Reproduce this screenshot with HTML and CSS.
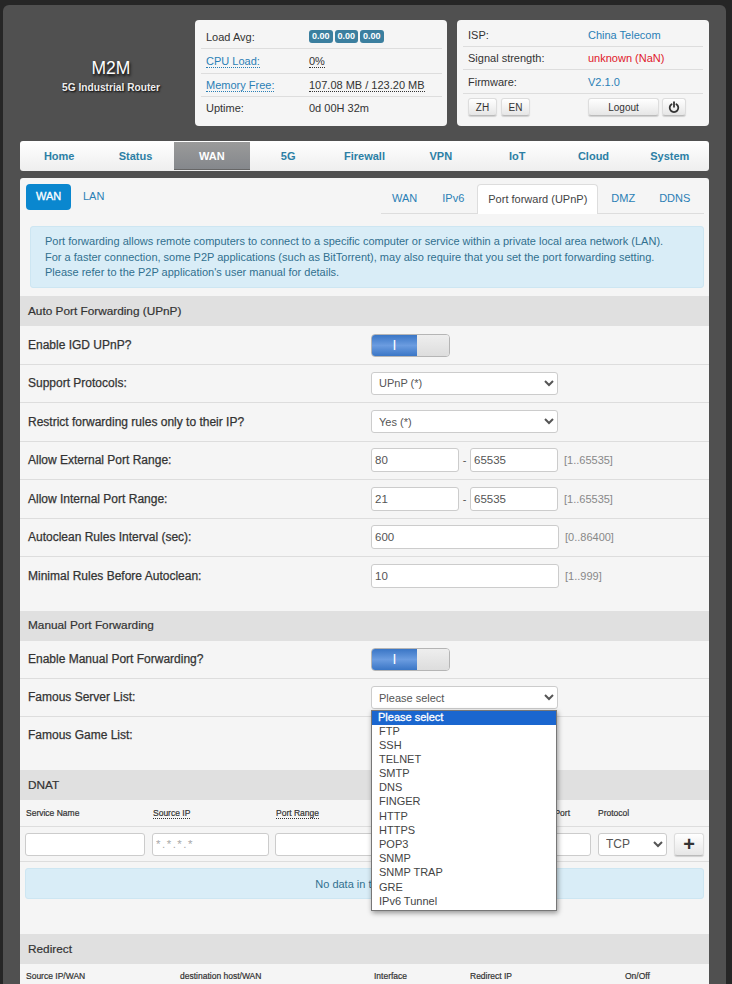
FILE: index.html
```html
<!DOCTYPE html>
<html lang="en">
<head>
<meta charset="utf-8">
<title>M2M</title>
<link rel="stylesheet" href="styles.css">
</head>
<body>
<div class="wrap">
  <header class="top">
    <div class="brand"><div class="brand-name">M2M</div><div class="brand-sub">5G Industrial Router</div></div>
    <div class="panel panel-load">
      <div class="stat"><span class="stat-k">Load Avg:</span><span class="stat-v"><b class="badge">0.00</b><b class="badge">0.00</b><b class="badge">0.00</b></span></div>
      <div class="stat"><span class="stat-k"><a class="hint link">CPU Load:</a></span><span class="stat-v"><span class="hint">0%</span></span></div>
      <div class="stat"><span class="stat-k"><a class="hint link">Memory Free:</a></span><span class="stat-v"><span class="hint">107.08 MB / 123.20 MB</span></span></div>
      <div class="stat"><span class="stat-k">Uptime:</span><span class="stat-v">0d 00H 32m</span></div>
    </div>
    <div class="panel panel-isp">
      <div class="stat"><span class="stat-k isp-k">ISP:</span><span class="stat-v link">China Telecom</span></div>
      <div class="stat"><span class="stat-k isp-k">Signal strength:</span><span class="stat-v red">unknown (NaN)</span></div>
      <div class="stat"><span class="stat-k isp-k">Firmware:</span><span class="stat-v link">V2.1.0</span></div>
      <div class="stat stat-btns">
        <div class="btns-l"><button class="btn btn-lang">ZH</button><button class="btn btn-lang">EN</button></div>
        <div class="btns-r"><button class="btn btn-logout">Logout</button><button class="btn btn-power"><svg width="12" height="13" viewBox="0 0 12 13"><path d="M3.6 3.2a4.3 4.3 0 1 0 4.8 0" fill="none" stroke="#333" stroke-width="1.8" stroke-linecap="round"/><path d="M6 1.2v4.6" stroke="#333" stroke-width="1.8" stroke-linecap="round"/></svg></button></div>
      </div>
    </div>
  </header>

  <nav class="nav">
    <a>Home</a><a>Status</a><a class="active">WAN</a><a>5G</a><a>Firewall</a><a>VPN</a><a>IoT</a><a>Cloud</a><a>System</a>
  </nav>

  <main class="content">
    <div class="tabbar">
      <div class="pills"><a class="pill on">WAN</a><a class="pill">LAN</a></div>
      <div class="tabs"><a class="tab">WAN</a><a class="tab">IPv6</a><a class="tab on">Port forward (UPnP)</a><a class="tab">DMZ</a><a class="tab">DDNS</a></div>
    </div>
    <div class="note">Port forwarding allows remote computers to connect to a specific computer or service within a private local area network (LAN).<br>For a faster connection, some P2P applications (such as BitTorrent), may also require that you set the port forwarding setting.<br>Please refer to the P2P application's user manual for details.</div>

    <h2 class="sec">Auto Port Forwarding (UPnP)</h2>
    <div class="row"><label>Enable IGD UPnP?</label><div class="toggle"><span class="t-on">I</span><span class="t-off"></span></div></div>
    <div class="row"><label>Support Protocols:</label><select class="sel"><option>UPnP (*)</option></select></div>
    <div class="row"><label>Restrict forwarding rules only to their IP?</label><select class="sel"><option>Yes (*)</option></select></div>
    <div class="row"><label>Allow External Port Range:</label><input class="inp short" value="80"><span class="dash">-</span><input class="inp short" value="65535"><span class="range">[1..65535]</span></div>
    <div class="row"><label>Allow Internal Port Range:</label><input class="inp short" value="21"><span class="dash">-</span><input class="inp short" value="65535"><span class="range">[1..65535]</span></div>
    <div class="row"><label>Autoclean Rules Interval (sec):</label><input class="inp wide" value="600"><span class="range">[0..86400]</span></div>
    <div class="row row-last"><label>Minimal Rules Before Autoclean:</label><input class="inp wide" value="10"><span class="range">[1..999]</span></div>

    <h2 class="sec sec-manual">Manual Port Forwarding</h2>
    <div class="row row-m1"><label>Enable Manual Port Forwarding?</label><div class="toggle"><span class="t-on">I</span><span class="t-off"></span></div></div>
    <div class="row row-m2"><label>Famous Server List:</label><select class="sel sel-low"><option>Please select</option></select>
      <ul class="menu">
        <li class="cur">Please select</li><li>FTP</li><li>SSH</li><li>TELNET</li><li>SMTP</li><li>DNS</li><li>FINGER</li><li>HTTP</li><li>HTTPS</li><li>POP3</li><li>SNMP</li><li>SNMP TRAP</li><li>GRE</li><li>IPv6 Tunnel</li>
      </ul>
    </div>
    <div class="row row-game"><label>Famous Game List:</label></div>

    <h2 class="sec sec-dnat">DNAT</h2>
    <div class="dnat-head">
      <span class="c1">Service Name</span><span class="c2"><span class="hint">Source IP</span></span><span class="c3"><span class="hint">Port Range</span></span><span class="c4"></span><span class="c5">Port</span><span class="c6">Protocol</span>
    </div>
    <div class="dnat-row">
      <input class="inp c1"><input class="inp c2" placeholder="*.*.*.*"><input class="inp c3"><input class="inp c4"><input class="inp c5">
      <select class="sel c6"><option>TCP</option></select>
      <button class="btn btn-add">+</button>
    </div>
    <div class="empty">No data in the table.</div>

    <h2 class="sec sec-redirect">Redirect</h2>
    <div class="redir-head"><span class="r1">Source IP/WAN</span><span class="r2">destination host/WAN</span><span class="r3">Interface</span><span class="r4">Redirect IP</span><span class="r5">On/Off</span></div>
  </main>
</div>
</body>
</html>
```
FILE: styles.css
```css
* { box-sizing: border-box; }
html, body { margin: 0; height: 984px; overflow: hidden; }
body {
  background: #262626;
  font-family: "Liberation Sans", Arial, sans-serif;
  font-size: 11px;
  color: #333;
}
a { color: #2a7fb5; text-decoration: none; }
.wrap {
  margin: 5px 6px 0 3px;
  padding: 15px 17px 0 17px;
  background: #505050;
  border-radius: 6px 6px 0 0;
  height: 979px;
}
.top { display: flex; height: 106px; }
.brand { width: 175px; padding: 37px 0 0 7px; text-align: center; color: #fff; }
.brand-name { font-size: 17.5px; line-height: 22px; text-shadow: 1px 2px 3px #000; }
.brand-sub { font-size: 10.2px; font-weight: bold; line-height: 16px; margin-top: 1px; text-shadow: 1px 1px 2px #000; color: #eee; }
.panel { width: 252px; background: #f5f5f5; border-radius: 4px; padding: 5px 5px 0 6px; }
.panel-isp { margin-left: 10px; padding: 4px 6px 0 6px; }
.stat { display: flex; align-items: center; height: 23px; border-bottom: 1px solid #ddd; padding-left: 5px; font-size: 11px; }
.panel-load .stat:first-child { height: 24px; }
.panel-load .stat:nth-child(2) { height: 25px; }
.panel-load .stat:last-child { border-bottom: 0; height: 21px; }
.panel-isp .stat:nth-child(3) { height: 24px; }
.stat-k { width: 103px; flex: none; }
.isp-k { width: 120px; }
.stat-v { display: flex; }
.hint { border-bottom: 1px dotted #333; line-height: 12px; }
.hint.link { border-color: #2a7fb5; }
.link { color: #2a7fb5; }
.red { color: #e0202a; }
.badge { background: #3b7f9f; color: #fff; font-size: 9px; font-weight: bold; padding: 1px 3px; border-radius: 3px; line-height: 11px; margin-right: 2px; }
.stat-btns { border-bottom: 0; align-items: flex-start; padding-top: 4px; height: 26px; }
.btns-l { display: flex; gap: 4px; width: 120px; }
.btns-r { display: flex; gap: 3px; }
.btn {
  font: 10px "Liberation Sans", Arial, sans-serif;
  color: #333;
  height: 18px;
  padding: 0;
  border: 1px solid #ddd;
  border-bottom-color: #bbb;
  border-radius: 3px;
  background: linear-gradient(#fff, #e6e6e6);
  box-shadow: 0 1px 1px rgba(0,0,0,.15);
}
.btn-lang { width: 29px; }
.btn-logout { width: 71px; }
.btn-power { width: 24px; display: flex; align-items: center; justify-content: center; }

.nav {
  display: grid;
  grid-template-columns: repeat(9, 1fr);
  padding: 1px;
  margin-top: 15px;
  height: 30px;
  background: linear-gradient(#fff, #eee);
  border-radius: 3px;
}
.nav a { display: flex; align-items: center; justify-content: center; font-weight: bold; font-size: 11px; color: #2c7fa5; }
.nav a.active { background: linear-gradient(#9a9a9a, #85888c); color: #fff; border-bottom: 1px solid #666; }

.content { margin-top: 7px; background: #f5f5f5; height: 806px; border-radius: 3px 3px 0 0; }
.tabbar { display: flex; justify-content: space-between; padding: 6px 5px 0 6px; height: 36px; }
.pills { display: flex; }
.pill { height: 26px; line-height: 25px; padding: 0 10px; font-size: 11px; border-radius: 4px; }
.pill.on { background: #0a87cf; color: #fff; -webkit-text-stroke: .3px #fff; margin-right: 2px; width: 45px; }
.tabs { display: flex; border-bottom: 1px solid #ddd; width: 323px; height: 30px; white-space: nowrap; }
.tab { height: 30px; line-height: 28px; padding: 0 12px; font-size: 11px; }
.tab:first-child { padding: 0 13px 0 11px; }
.tab:nth-child(2) { padding: 0 13px 0 12px; }
.tab.on { color: #444; background: #fff; border: 1px solid #ddd; border-bottom: 0; border-radius: 4px 4px 0 0; padding: 0 10px; margin-right: 1px; }
.note {
  margin: 12px 5px 0 10px;
  height: 62px;
  padding: 7px 14px;
  background: #d9edf7;
  border: 1px solid #cde6f2;
  border-radius: 3px;
  color: #31708f;
  font-size: 11px;
  line-height: 15.5px;
}
.sec { margin: 8px 0 0; height: 30px; padding-left: 8px; background: #e0e0e0; font-size: 11.8px; font-weight: normal; line-height: 30px; color: #333; -webkit-text-stroke: .2px #333; }
.sec-manual { line-height: 28px; }
.sec-dnat { margin-top: 0; }
.row { position: relative; display: flex; align-items: center; height: 38.5px; border-bottom: 1px solid #ddd; padding-left: 8px; }
.row label { width: 343px; flex: none; font-size: 12px; font-weight: normal; -webkit-text-stroke: .25px #333; }
.row-last { border-bottom: 0; height: 38px; }
.row-last + .sec { margin-top: 16px; }
.row-m1 { height: 37.5px; }
.row-m2 { height: 38px; }
.row-game { height: 53.5px; border-bottom: 0; align-items: flex-start; padding-top: 11px; }
.toggle { display: flex; width: 79px; height: 23px; margin-top: 1px; border: 1px solid #b5b5b5; border-radius: 4px; overflow: hidden; }
.t-on { width: 45px; background: linear-gradient(#3a76c6, #6b9ce0 50%, #3a76c6); color: #fff; text-align: center; line-height: 21px; font-size: 14px; }
.t-off { flex: 1; background: linear-gradient(#eee, #ddd); }
.sel {
  width: 187px; height: 23px;
  border: 1px solid #ccc; border-radius: 3px;
  background: #fff; color: #555;
  font: 11px "Liberation Sans", Arial, sans-serif;
  padding-left: 3px;
}
.sel-low { margin-top: 1px; }
.inp {
  height: 24px; border: 1px solid #ccc; border-radius: 3px; background: #fff; color: #555;
  font: 11.5px "Liberation Sans", Arial, sans-serif; padding: 0 3px;
}
.inp::placeholder { color: #aaa; letter-spacing: 1.5px; }
.inp.short { width: 88px; }
.inp.wide { width: 188px; }
.dash { width: 11px; text-align: center; color: #555; font-size: 11px; }
.range { color: #888; font-size: 11px; margin-left: 6px; }
.menu {
  position: absolute; z-index: 5; left: 351px; top: 31px; width: 186px; height: 201px;
  margin: 0; padding: 0; list-style: none; background: #fff;
  border: 1px solid #777; box-shadow: 1px 2px 5px rgba(0,0,0,.4);
  font-size: 11px; color: #444;
}
.menu li { height: 14.2px; line-height: 13px; padding-left: 7px; }
.menu .cur { background: #1a66cf; color: #fff; height: 14px; line-height: 13px; padding-left: 6px; -webkit-text-stroke: .3px #fff; }
.dnat-head { display: flex; align-items: center; height: 27px; border-bottom: 1px solid #ddd; padding-left: 6px; font-size: 8.5px; -webkit-text-stroke: .2px #333; white-space: nowrap; }
.dnat-head .c1 { width: 127px; }
.dnat-head .c2 { width: 123px; }
.dnat-head .c3 { width: 114px; }
.dnat-head .c4 { width: 100px; }
.dnat-head .c5 { width: 108px; text-align: right; padding-right: 28px; }
.dnat-head .c6 { width: 60px; }
.dnat-row { display: flex; align-items: center; height: 35px; border-bottom: 1px solid #ddd; padding-left: 5px; }
.dnat-row .inp { height: 23px; margin-right: 6px; }
.dnat-row .inp.c1 { width: 120px; margin-right: 7px; }
.dnat-row .inp.c2 { width: 117px; }
.dnat-row .inp.c3 { width: 110px; }
.dnat-row .inp.c4 { width: 90px; }
.dnat-row .inp.c5 { width: 104px; margin-right: 7px; }
.dnat-row .sel.c6 { width: 69px; font-size: 12px; margin-right: 7px; }
.btn-add { width: 30px; height: 23px; font-size: 20px; font-weight: bold; line-height: 19px; }
.empty { margin: 6px 5px 0; height: 31px; line-height: 30px; text-align: center; background: #d9edf7; border: 1px solid #cde6f2; border-radius: 3px; color: #31708f; font-size: 11px; }
.sec-redirect { margin-top: 35px; }
.redir-head { display: flex; padding: 7px 0 0 6px; font-size: 8.5px; -webkit-text-stroke: .2px #333; line-height: 10px; }
.r1 { width: 154px; } .r2 { width: 194px; } .r3 { width: 96px; } .r4 { width: 155px; }
```
